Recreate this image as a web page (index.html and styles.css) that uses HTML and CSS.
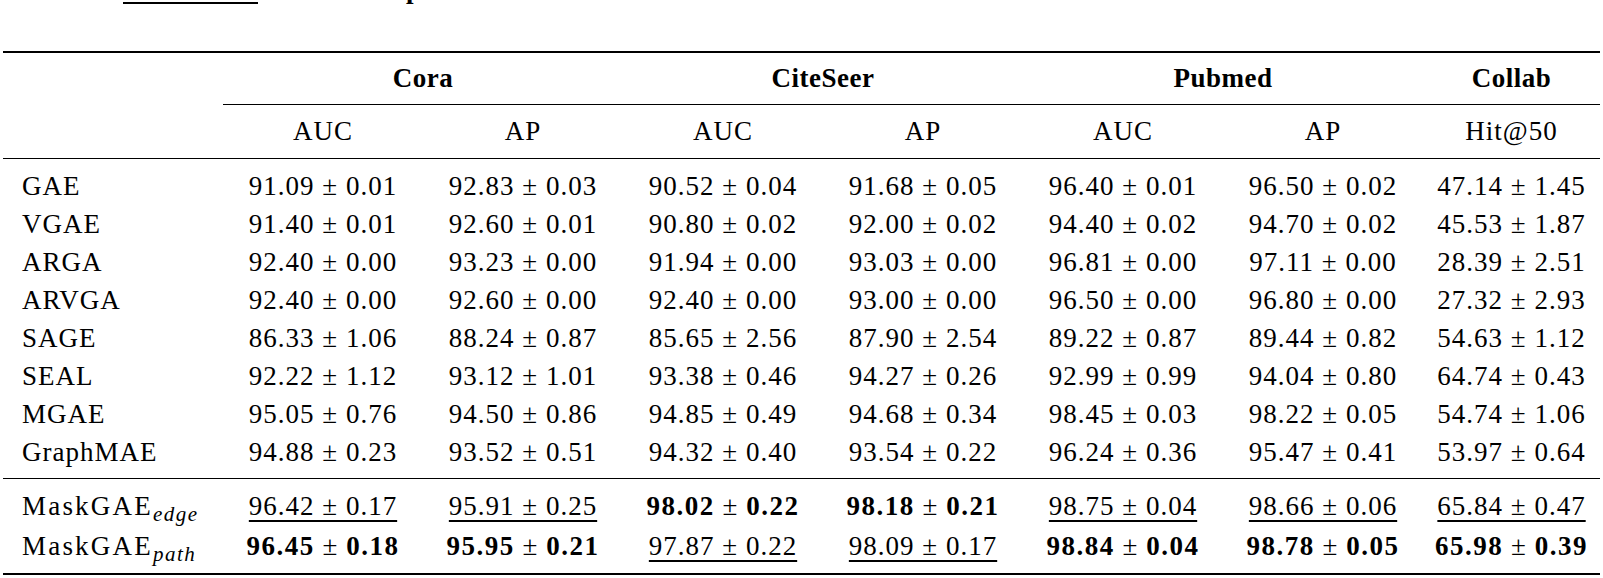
FILE: index.html
```html
<!DOCTYPE html>
<html lang="en">
<head>
<meta charset="utf-8">
<title>Link prediction results</title>
<link rel="stylesheet" href="styles.css">
</head>
<body>
<div class="caption-strip">
  <div class="caption-line">
    <span class="caption-blank"></span>
    <span class="caption-text">p</span>
  </div>
</div>
<table class="results">
  <colgroup>
    <col class="c-label">
    <col class="c-val"><col class="c-val">
    <col class="c-val"><col class="c-val">
    <col class="c-val"><col class="c-val">
    <col class="c-last">
  </colgroup>
  <thead>
    <tr class="r-group">
      <th class="label"></th>
      <th colspan="2" class="group">Cora</th>
      <th colspan="2" class="group">CiteSeer</th>
      <th colspan="2" class="group">Pubmed</th>
      <th class="group">Collab</th>
    </tr>
    <tr class="r-metric">
      <th class="label"></th>
      <th>AUC</th><th>AP</th>
      <th>AUC</th><th>AP</th>
      <th>AUC</th><th>AP</th>
      <th>Hit@50</th>
    </tr>
  </thead>
  <tbody>
    <tr class="r-first">
      <td class="label">GAE</td>
      <td>91.09 ± 0.01</td><td>92.83 ± 0.03</td><td>90.52 ± 0.04</td><td>91.68 ± 0.05</td><td>96.40 ± 0.01</td><td>96.50 ± 0.02</td><td>47.14 ± 1.45</td>
    </tr>
    <tr class="r-body">
      <td class="label">VGAE</td>
      <td>91.40 ± 0.01</td><td>92.60 ± 0.01</td><td>90.80 ± 0.02</td><td>92.00 ± 0.02</td><td>94.40 ± 0.02</td><td>94.70 ± 0.02</td><td>45.53 ± 1.87</td>
    </tr>
    <tr class="r-body">
      <td class="label">ARGA</td>
      <td>92.40 ± 0.00</td><td>93.23 ± 0.00</td><td>91.94 ± 0.00</td><td>93.03 ± 0.00</td><td>96.81 ± 0.00</td><td>97.11 ± 0.00</td><td>28.39 ± 2.51</td>
    </tr>
    <tr class="r-body">
      <td class="label">ARVGA</td>
      <td>92.40 ± 0.00</td><td>92.60 ± 0.00</td><td>92.40 ± 0.00</td><td>93.00 ± 0.00</td><td>96.50 ± 0.00</td><td>96.80 ± 0.00</td><td>27.32 ± 2.93</td>
    </tr>
    <tr class="r-body">
      <td class="label">SAGE</td>
      <td>86.33 ± 1.06</td><td>88.24 ± 0.87</td><td>85.65 ± 2.56</td><td>87.90 ± 2.54</td><td>89.22 ± 0.87</td><td>89.44 ± 0.82</td><td>54.63 ± 1.12</td>
    </tr>
    <tr class="r-body">
      <td class="label">SEAL</td>
      <td>92.22 ± 1.12</td><td>93.12 ± 1.01</td><td>93.38 ± 0.46</td><td>94.27 ± 0.26</td><td>92.99 ± 0.99</td><td>94.04 ± 0.80</td><td>64.74 ± 0.43</td>
    </tr>
    <tr class="r-body">
      <td class="label">MGAE</td>
      <td>95.05 ± 0.76</td><td>94.50 ± 0.86</td><td>94.85 ± 0.49</td><td>94.68 ± 0.34</td><td>98.45 ± 0.03</td><td>98.22 ± 0.05</td><td>54.74 ± 1.06</td>
    </tr>
    <tr class="r-lastbase">
      <td class="label">GraphMAE</td>
      <td>94.88 ± 0.23</td><td>93.52 ± 0.51</td><td>94.32 ± 0.40</td><td>93.54 ± 0.22</td><td>96.24 ± 0.36</td><td>95.47 ± 0.41</td><td>53.97 ± 0.64</td>
    </tr>
    <tr class="r-edge">
      <td class="label"><span class="model">MaskGAE</span><sub>edge</sub></td>
      <td><span class="second">96.42 ± 0.17</span></td>
      <td><span class="second">95.91 ± 0.25</span></td>
      <td><b>98.02</b> ± <b>0.22</b></td>
      <td><b>98.18</b> ± <b>0.21</b></td>
      <td><span class="second">98.75 ± 0.04</span></td>
      <td><span class="second">98.66 ± 0.06</span></td>
      <td><span class="second">65.84 ± 0.47</span></td>
    </tr>
    <tr class="r-path">
      <td class="label"><span class="model">MaskGAE</span><sub>path</sub></td>
      <td><b>96.45</b> ± <b>0.18</b></td>
      <td><b>95.95</b> ± <b>0.21</b></td>
      <td><span class="second">97.87 ± 0.22</span></td>
      <td><span class="second">98.09 ± 0.17</span></td>
      <td><b>98.84</b> ± <b>0.04</b></td>
      <td><b>98.78</b> ± <b>0.05</b></td>
      <td><b>65.98</b> ± <b>0.39</b></td>
    </tr>
  </tbody>
</table>
</body>
</html>
```

FILE: styles.css
```css
html, body {
  margin: 0;
  padding: 0;
  background: #ffffff;
}

body {
  font-family: "Liberation Serif", "Times New Roman", serif;
  color: #000000;
  font-size: 27px;
}

.caption-strip {
  height: 8px;
  overflow: hidden;
}

.caption-line {
  display: flex;
  align-items: flex-start;
  margin-top: -24px;
  height: 40px;
}

.caption-blank {
  display: block;
  width: 135px;
  margin-left: 123px;
  margin-top: 26px;
  height: 0;
  border-bottom: 2px solid #000;
}

.caption-text {
  display: block;
  margin-left: 148px;
  font-weight: bold;
  line-height: 27px;
}

.results {
  margin-top: 43px;
  margin-left: 3px;
  border-collapse: separate;
  border-spacing: 0;
  table-layout: fixed;
  width: 1597px;
}

.c-label { width: 220px; }
.c-val { width: 200px; }
.c-last { width: 177px; }

.results th,
.results td {
  padding: 0;
  text-align: center;
  vertical-align: middle;
  line-height: 27px;
  letter-spacing: 1px;
  white-space: nowrap;
}

.results th {
  font-weight: normal;
}

.results .label {
  text-align: left;
  padding-left: 19px;
}

.r-group { height: 54px; }
.r-group th {
  border-top: 2px solid #000;
}
.r-group th.group {
  font-weight: bold;
  letter-spacing: 0.5px;
  border-bottom: 1px solid #000;
}

.r-metric { height: 54px; }
.r-metric th {
  border-bottom: 1px solid #000;
}

.r-first { height: 46px; }
.r-first td { padding-top: 8px; }

.r-body { height: 38px; }

.r-lastbase { height: 46px; }
.r-lastbase td {
  padding-bottom: 7px;
  border-bottom: 1px solid #000;
}

.r-edge { height: 48px; }
.r-edge td {
  padding-top: 12px;
  padding-bottom: 6px;
}

.r-path { height: 48px; }
.r-path td {
  padding-top: 4px;
  padding-bottom: 12px;
  border-bottom: 2px solid #000;
}

.model {
  letter-spacing: 2.2px;
}

.results b {
  font-weight: bold;
  letter-spacing: 1.5px;
}

.results sub {
  font-style: italic;
  font-size: 21px;
  line-height: 0;
  letter-spacing: 1.5px;
  vertical-align: -6px;
}

.second {
  text-decoration: underline;
  text-decoration-thickness: 1.5px;
  text-underline-offset: 5px;
}
```
